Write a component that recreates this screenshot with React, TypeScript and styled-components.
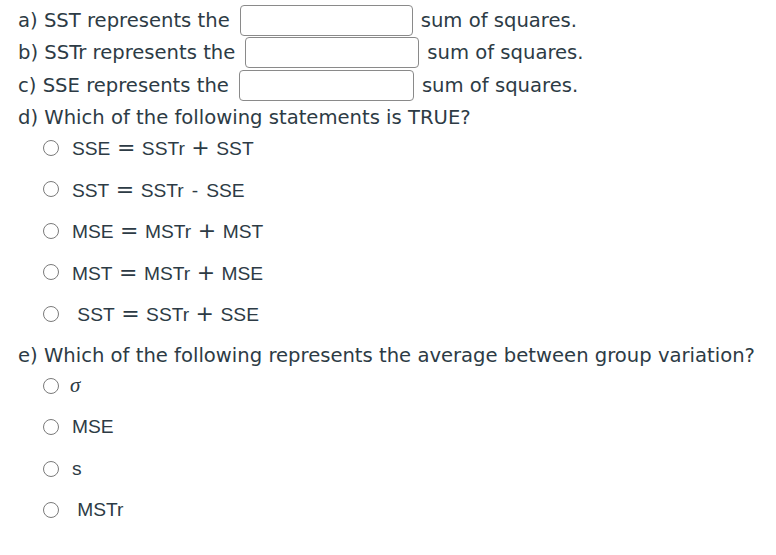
import React from "react";
import styled, { createGlobalStyle } from "styled-components";

const Global = createGlobalStyle`
  html, body { margin: 0; padding: 0; background: #ffffff; }
  body { font-family: "DejaVu Sans", Verdana, sans-serif; color: #2d3b45; }
`;

const Page = styled.div`
  padding: 4px 0 0 18px;
`;

const Line = styled.div`
  display: flex;
  align-items: center;
  height: 32.5px;
  font-size: 19.6px;
  white-space: nowrap;
`;

const Blank = styled.input.attrs({ type: "text" })<{ $w: number }>`
  box-sizing: border-box;
  width: ${(p) => p.$w}px;
  height: 31px;
  margin: 0 8px 0 10px;
  border: 1px solid #8a8a8a;
  border-radius: 4px;
  background: #fff;
  padding: 0;
  outline: none;
`;

const Question = styled.div`
  display: flex;
  align-items: center;
  height: 32px;
  font-size: 19.6px;
  white-space: nowrap;
`;

const Options = styled.ul`
  list-style: none;
  margin: 0;
  padding: 0 0 12px 25px;
  display: flex;
  flex-direction: column;
  gap: 13.5px;
`;

const Option = styled.li`
  display: flex;
  align-items: center;
  height: 28px;
`;

const Radio = styled.input.attrs({ type: "radio" })`
  appearance: none;
  box-sizing: border-box;
  width: 16px;
  height: 16px;
  margin: 0 13px 0 0;
  border: 1.5px solid #7a7a7a;
  border-radius: 50%;
  background: #fff;
  flex: none;
`;

const Label = styled.span`
  font-family: "Liberation Sans", Arial, sans-serif;
  font-size: 19.2px;
  color: #2d3b45;
  white-space: pre;
`;

const Op = styled.span<{ $minus?: boolean }>`
  font-family: ${(p) => (p.$minus ? `"Liberation Sans", Arial, sans-serif` : `"DejaVu Sans", Verdana, sans-serif`)};
  font-size: ${(p) => (p.$minus ? "19.2px" : "22px")};
  margin: 0 ${(p) => (p.$minus ? "8px" : "6.5px")};
`;

const Sigma = styled.span`
  font-family: "Liberation Serif", "Times New Roman", serif;
  font-style: italic;
  font-size: 21px;
  color: #2d3b45;
  margin-left: -2px;
`;

const blanks = [
  { label: "a) SST represents the", w: 173 },
  { label: "b) SSTr represents the", w: 174 },
  { label: "c) SSE represents the", w: 175 },
];

type Eq = { lead?: boolean; parts: string[] };

const dOptions: Eq[] = [
  { parts: ["SSE", "=", "SSTr", "+", "SST"] },
  { parts: ["SST", "=", "SSTr", "-", "SSE"] },
  { parts: ["MSE", "=", "MSTr", "+", "MST"] },
  { parts: ["MST", "=", "MSTr", "+", "MSE"] },
  { lead: true, parts: ["SST", "=", "SSTr", "+", "SSE"] },
];

const OPS = ["=", "+", "-"];

function Equation({ eq }: { eq: Eq }) {
  return (
    <Label>
      {eq.lead ? "\u00a0" : ""}
      {eq.parts.map((p, i) =>
        OPS.includes(p) ? (
          <Op key={i} $minus={p === "-"}>
            {p}
          </Op>
        ) : (
          <React.Fragment key={i}>{p}</React.Fragment>
        )
      )}
    </Label>
  );
}

export default function App() {
  return (
    <>
      <Global />
      <Page>
        {blanks.map((b) => (
          <Line key={b.label}>
            {b.label}
            <Blank $w={b.w} aria-label={b.label} />
            sum of squares.
          </Line>
        ))}
        <Question>d) Which of the following statements is TRUE?</Question>
        <Options>
          {dOptions.map((o, i) => (
            <Option key={i}>
              <Radio name="d" />
              <Equation eq={o} />
            </Option>
          ))}
        </Options>
        <Question>e) Which of the following represents the average between group variation?</Question>
        <Options>
          <Option>
            <Radio name="e" />
            <Sigma>σ</Sigma>
          </Option>
          <Option>
            <Radio name="e" />
            <Label>MSE</Label>
          </Option>
          <Option>
            <Radio name="e" />
            <Label>s</Label>
          </Option>
          <Option>
            <Radio name="e" />
            <Label>{"\u00a0MSTr"}</Label>
          </Option>
        </Options>
      </Page>
    </>
  );
}
